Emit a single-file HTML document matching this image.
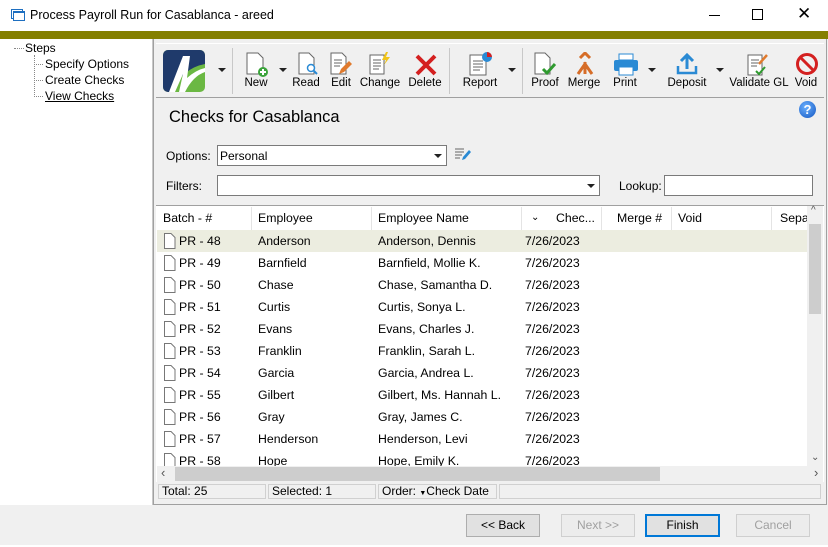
<!DOCTYPE html>
<html><head><style>
*{margin:0;padding:0;box-sizing:border-box}
body{width:828px;height:547px;position:relative;overflow:hidden;background:#f0f0f0;font-family:"Liberation Sans",sans-serif;font-size:12px;color:#000}
.a{position:absolute}
.t{position:absolute;white-space:nowrap}
.lbl{position:absolute;top:77px;font-size:11.5px;white-space:nowrap;transform:translateX(-50%)}
.dd{position:absolute;top:68px;width:0;height:0;border-left:4px solid transparent;border-right:4px solid transparent;border-top:4px solid #222}
.sep{position:absolute;top:48px;width:1px;height:46px;background:#c8c8c8}
.row{position:absolute;left:157px;width:650px;height:22px}
.row span{position:absolute;top:4px;font-size:12.3px;white-space:nowrap}
.hd{position:absolute;top:211px;font-size:12.3px;white-space:nowrap}
.vs{position:absolute;top:207px;width:1px;height:23px;background:#e4e4e4}
.btn{position:absolute;top:514px;height:23px;border:1px solid #adadad;background:#e1e1e1;text-align:center;line-height:21px;font-size:12px}
.sb{position:absolute;top:484px;height:15px;border:1px solid #d0d0d0;font-size:12px;line-height:13px;padding-left:3px}
</style></head><body>
<div class="a" style="left:0;top:0;width:828px;height:31px;background:#fff"></div>
<div class="a" style="left:11px;top:9px;width:12px;height:10px;border:1px solid #1e6fc0"></div>
<div class="a" style="left:13px;top:11px;width:12px;height:10px;border:1px solid #1e6fc0;background:#fff;border-top-width:2px"></div>
<div class="t" style="left:30px;top:8px;font-size:12.5px">Process Payroll Run for Casablanca - areed</div>
<div class="a" style="left:709px;top:15px;width:11px;height:1px;background:#000"></div>
<div class="a" style="left:752px;top:9px;width:11px;height:11px;border:1px solid #000"></div>
<div class="t" style="left:797px;top:4px;font-size:17px">✕</div>
<div class="a" style="left:0;top:31px;width:828px;height:8px;background:#847f00"></div>
<div class="a" style="left:0;top:39px;width:153px;height:466px;background:#fff;border-right:1px solid #c8c8c8"></div>
<div class="a" style="left:14px;top:48px;width:10px;border-top:1px dotted #888"></div>
<div class="t" style="left:25px;top:41px">Steps</div>
<div class="a" style="left:34px;top:55px;height:42px;border-left:1px dotted #888"></div>
<div class="a" style="left:34px;top:64px;width:9px;border-top:1px dotted #888"></div>
<div class="a" style="left:34px;top:80px;width:9px;border-top:1px dotted #888"></div>
<div class="a" style="left:34px;top:96px;width:9px;border-top:1px dotted #888"></div>
<div class="t" style="left:45px;top:57px">Specify Options</div>
<div class="t" style="left:45px;top:73px">Create Checks</div>
<div class="t" style="left:45px;top:89px;text-decoration:underline">View Checks</div>
<div class="a" style="left:153px;top:39px;width:674px;height:466px;border-left:1px solid #a0a0a0;border-right:1px solid #a0a0a0;border-bottom:1px solid #a0a0a0;background:#f0f0f0"></div>
<div class="a" style="left:156px;top:43px;width:668px;height:55px;background:#f0f0f0;border-top:1px solid #fff;border-bottom:1px solid #a0a0a0"></div>
<svg class="a" style="left:163px;top:50px" width="42" height="42" viewBox="0 0 42 42">
<defs><clipPath id="c"><rect width="42" height="42" rx="5"/></clipPath></defs>
<g clip-path="url(#c)"><rect width="42" height="42" fill="#6bb843"/>
<path d="M0 0H42V14Q20 18 8 42H0Z" fill="#1f3a6b"/>
<path d="M6 42L20 6H27L24 28Q33 20 42 18V22Q30 26 22 42H16L20 24L12 42Z" fill="#fff"/></g>
</svg>
<div class="dd" style="left:218px"></div>
<div class="sep" style="left:232px"></div>
<svg class="a" style="left:246px;top:52px" width="24" height="26"><path d="M1 1H12L17 6V22H1Z" fill="#fff" stroke="#666"/><circle cx="17" cy="20" r="5" fill="#3aa33a"/><path d="M14 20H20M17 17V23" stroke="#fff" stroke-width="2"/></svg>
<div class="lbl" style="left:256px">New</div>
<div class="dd" style="left:279px"></div>
<svg class="a" style="left:298px;top:52px" width="22" height="26"><path d="M1 1H11L16 6V22H1Z" fill="#fff" stroke="#666"/><circle cx="13" cy="16" r="3.5" fill="#fff" stroke="#2a8ad4" stroke-width="1.5"/><path d="M15.5 18.5L19 22" stroke="#2a8ad4" stroke-width="2"/></svg>
<div class="lbl" style="left:306px">Read</div>
<svg class="a" style="left:330px;top:52px" width="24" height="26"><path d="M1 1H12L16 5V22H1Z" fill="#fff" stroke="#666"/><path d="M4 8H12M4 11H12M4 14H10" stroke="#666"/><path d="M9 22L11 17L19 9L22 12L14 20Z" fill="#e07a2d"/></svg>
<div class="lbl" style="left:341px">Edit</div>
<svg class="a" style="left:369px;top:52px" width="24" height="26"><path d="M1 3H15V22H1Z" fill="#fff" stroke="#666"/><path d="M4 8H12M4 11H12M4 14H12M4 17H10" stroke="#666"/><path d="M17 0L13 8H17L15 13L21 5H17L19 0Z" fill="#f0c419"/></svg>
<div class="lbl" style="left:380px">Change</div>
<svg class="a" style="left:414px;top:53px" width="24" height="24"><path d="M3 3L21 21M21 3L3 21" stroke="#d42020" stroke-width="4"/></svg>
<div class="lbl" style="left:425px">Delete</div>
<div class="sep" style="left:449px"></div>
<svg class="a" style="left:468px;top:51px" width="26" height="26"><path d="M2 4H18V24H2Z" fill="#fff" stroke="#666"/><path d="M5 10H15M5 13H15M5 16H15M5 19H12" stroke="#666"/><circle cx="19" cy="6" r="5" fill="#2a8ad4"/><path d="M19 6V1A5 5 0 0 1 24 6Z" fill="#d42020"/></svg>
<div class="lbl" style="left:480px">Report</div>
<div class="dd" style="left:508px"></div>
<div class="sep" style="left:522px"></div>
<svg class="a" style="left:534px;top:52px" width="24" height="26"><path d="M1 1H11L16 6V22H1Z" fill="#fff" stroke="#666"/><path d="M9 17L13 21L21 12" stroke="#2f9a2f" stroke-width="3" fill="none"/></svg>
<div class="lbl" style="left:545px">Proof</div>
<svg class="a" style="left:574px;top:52px" width="22" height="24"><path d="M11 22V10M4 22L11 12L18 22M6 6L11 1L16 6" stroke="#d66d28" stroke-width="3" fill="none"/></svg>
<div class="lbl" style="left:584px">Merge</div>
<svg class="a" style="left:613px;top:53px" width="26" height="24"><rect x="6" y="1" width="14" height="6" fill="#fff" stroke="#2a8ad4"/><rect x="1" y="7" width="24" height="11" rx="2" fill="#2a8ad4"/><rect x="6" y="14" width="14" height="8" fill="#fff" stroke="#2a8ad4"/></svg>
<div class="lbl" style="left:625px">Print</div>
<div class="dd" style="left:648px"></div>
<svg class="a" style="left:676px;top:52px" width="22" height="24"><path d="M2 14V21H20V14" stroke="#2a8ad4" stroke-width="2.5" fill="none"/><path d="M11 17V3M5 9L11 3L17 9" stroke="#2a8ad4" stroke-width="3" fill="none"/></svg>
<div class="lbl" style="left:687px">Deposit</div>
<div class="dd" style="left:716px"></div>
<svg class="a" style="left:747px;top:52px" width="24" height="26"><path d="M1 3H15V23H1Z" fill="#fff" stroke="#666"/><path d="M4 8H12M4 11H12M4 14H10" stroke="#666"/><path d="M12 12L20 3" stroke="#e07a2d" stroke-width="2.5"/><path d="M9 19L12 22L18 15" stroke="#2f9a2f" stroke-width="2" fill="none"/></svg>
<div class="lbl" style="left:759px">Validate GL</div>
<svg class="a" style="left:795px;top:52px" width="24" height="24"><circle cx="12" cy="12" r="9.5" fill="none" stroke="#d42020" stroke-width="3"/><path d="M5 5L19 19" stroke="#d42020" stroke-width="3"/></svg>
<div class="lbl" style="left:806px">Void</div>
<div class="t" style="left:169px;top:108px;font-size:16.5px">Checks for Casablanca</div>
<div class="a" style="left:799px;top:101px;width:17px;height:17px;border-radius:50%;background:radial-gradient(circle at 40% 35%,#6ab0ff,#1456c0);color:#fff;font-weight:bold;font-size:13px;text-align:center;line-height:17px">?</div>
<div class="t" style="left:166px;top:149px">Options:</div>
<div class="a" style="left:217px;top:145px;width:230px;height:21px;background:#fff;border:1px solid #7a7a7a"></div>
<div class="t" style="left:220px;top:149px">Personal</div>
<div class="dd" style="left:434px;top:154px"></div>
<svg class="a" style="left:454px;top:146px" width="18" height="16"><path d="M1 3H10M1 6H10M1 9H8M1 12H6" stroke="#666"/><path d="M8 14L9 11L15 4L17 6L11 13Z" fill="#2a8ad4"/></svg>
<div class="t" style="left:166px;top:179px">Filters:</div>
<div class="a" style="left:217px;top:175px;width:383px;height:21px;background:#fff;border:1px solid #7a7a7a"></div>
<div class="dd" style="left:587px;top:184px"></div>
<div class="t" style="left:619px;top:179px">Lookup:</div>
<div class="a" style="left:664px;top:175px;width:149px;height:21px;background:#fff;border:1px solid #7a7a7a"></div>
<div class="a" style="left:156px;top:205px;width:668px;height:277px;background:#fff;border-top:1px solid #a0a0a0"></div>
<div class="hd" style="left:163px">Batch - #</div>
<div class="hd" style="left:258px">Employee</div>
<div class="hd" style="left:378px">Employee Name</div>
<div class="hd" style="left:531px;font-size:10px;top:212px">&#8964;</div>
<div class="hd" style="left:556px">Chec...</div>
<div class="hd" style="left:617px">Merge #</div>
<div class="hd" style="left:678px">Void</div>
<div class="hd" style="left:780px;width:27px;overflow:hidden">Separate</div>
<div class="vs" style="left:251px"></div><div class="vs" style="left:371px"></div><div class="vs" style="left:521px"></div><div class="vs" style="left:601px"></div><div class="vs" style="left:671px"></div><div class="vs" style="left:771px"></div>
<div class="a" style="left:157px;top:230px;width:650px;height:22px;background:#ecede0"></div>
<div class="a" style="left:807px;top:206px;width:16px;height:260px;background:#f0f0f0"></div>
<div class="a" style="left:809px;top:224px;width:12px;height:90px;background:#cdcdcd"></div>
<div class="t" style="left:811px;top:205px;font-size:10px;color:#555">^</div>
<div class="t" style="left:811px;top:452px;font-size:10px;color:#555">&#8964;</div>
<div class="a" style="left:157px;top:466px;width:666px;height:16px;background:#f0f0f0"></div>
<div class="a" style="left:175px;top:467px;width:485px;height:14px;background:#cdcdcd"></div>
<div class="t" style="left:161px;top:465px;font-size:13px;color:#555">‹</div>
<div class="t" style="left:814px;top:465px;font-size:13px;color:#555">›</div>
<div class="sb" style="left:158px;width:108px">Total: 25</div>
<div class="sb" style="left:268px;width:108px">Selected: 1</div>
<div class="sb" style="left:378px;width:119px">Order: <span style="font-size:7px">▼</span>Check Date</div>
<div class="sb" style="left:499px;width:322px"></div>
<div class="btn" style="left:466px;width:74px">&lt;&lt; Back</div>
<div class="btn" style="left:561px;width:74px;color:#a0a0a0;border-color:#cfcfcf;background:#ececec">Next &gt;&gt;</div>
<div class="btn" style="left:645px;width:75px;border:2px solid #0078d7;line-height:19px">Finish</div>
<div class="btn" style="left:736px;width:74px;color:#a0a0a0;border-color:#cfcfcf;background:#ececec">Cancel</div>
<div class="a" style="left:0;top:545px;width:828px;height:2px;background:#fff"></div>
<div style="position:absolute;left:0;top:0;width:828px;height:466px;clip-path:inset(230px 0 0 0)">
<div class="row" style="top:230px"><span style="left:22px">PR - 48</span><span style="left:101px">Anderson</span><span style="left:221px">Anderson, Dennis</span><span style="left:368px">7/26/2023</span></div>
<div class="row" style="top:252px"><span style="left:22px">PR - 49</span><span style="left:101px">Barnfield</span><span style="left:221px">Barnfield, Mollie K.</span><span style="left:368px">7/26/2023</span></div>
<div class="row" style="top:274px"><span style="left:22px">PR - 50</span><span style="left:101px">Chase</span><span style="left:221px">Chase, Samantha D.</span><span style="left:368px">7/26/2023</span></div>
<div class="row" style="top:296px"><span style="left:22px">PR - 51</span><span style="left:101px">Curtis</span><span style="left:221px">Curtis, Sonya L.</span><span style="left:368px">7/26/2023</span></div>
<div class="row" style="top:318px"><span style="left:22px">PR - 52</span><span style="left:101px">Evans</span><span style="left:221px">Evans, Charles J.</span><span style="left:368px">7/26/2023</span></div>
<div class="row" style="top:340px"><span style="left:22px">PR - 53</span><span style="left:101px">Franklin</span><span style="left:221px">Franklin, Sarah L.</span><span style="left:368px">7/26/2023</span></div>
<div class="row" style="top:362px"><span style="left:22px">PR - 54</span><span style="left:101px">Garcia</span><span style="left:221px">Garcia, Andrea L.</span><span style="left:368px">7/26/2023</span></div>
<div class="row" style="top:384px"><span style="left:22px">PR - 55</span><span style="left:101px">Gilbert</span><span style="left:221px">Gilbert, Ms. Hannah L.</span><span style="left:368px">7/26/2023</span></div>
<div class="row" style="top:406px"><span style="left:22px">PR - 56</span><span style="left:101px">Gray</span><span style="left:221px">Gray, James C.</span><span style="left:368px">7/26/2023</span></div>
<div class="row" style="top:428px"><span style="left:22px">PR - 57</span><span style="left:101px">Henderson</span><span style="left:221px">Henderson, Levi</span><span style="left:368px">7/26/2023</span></div>
<div class="row" style="top:450px"><span style="left:22px">PR - 58</span><span style="left:101px">Hope</span><span style="left:221px">Hope, Emily K.</span><span style="left:368px">7/26/2023</span></div>
<svg style="position:absolute;left:164px;top:233px" width="12" height="240"><g fill="#fff" stroke="#777">
<path d="M.5 .5H7L11 4.5V15.5H.5Z"/><path d="M.5 22.5H7L11 26.5V37.5H.5Z"/><path d="M.5 44.5H7L11 48.5V59.5H.5Z"/><path d="M.5 66.5H7L11 70.5V81.5H.5Z"/><path d="M.5 88.5H7L11 92.5V103.5H.5Z"/><path d="M.5 110.5H7L11 114.5V125.5H.5Z"/><path d="M.5 132.5H7L11 136.5V147.5H.5Z"/><path d="M.5 154.5H7L11 158.5V169.5H.5Z"/><path d="M.5 176.5H7L11 180.5V191.5H.5Z"/><path d="M.5 198.5H7L11 202.5V213.5H.5Z"/><path d="M.5 220.5H7L11 224.5V235.5H.5Z"/></g></svg>
</div>
</body></html>
